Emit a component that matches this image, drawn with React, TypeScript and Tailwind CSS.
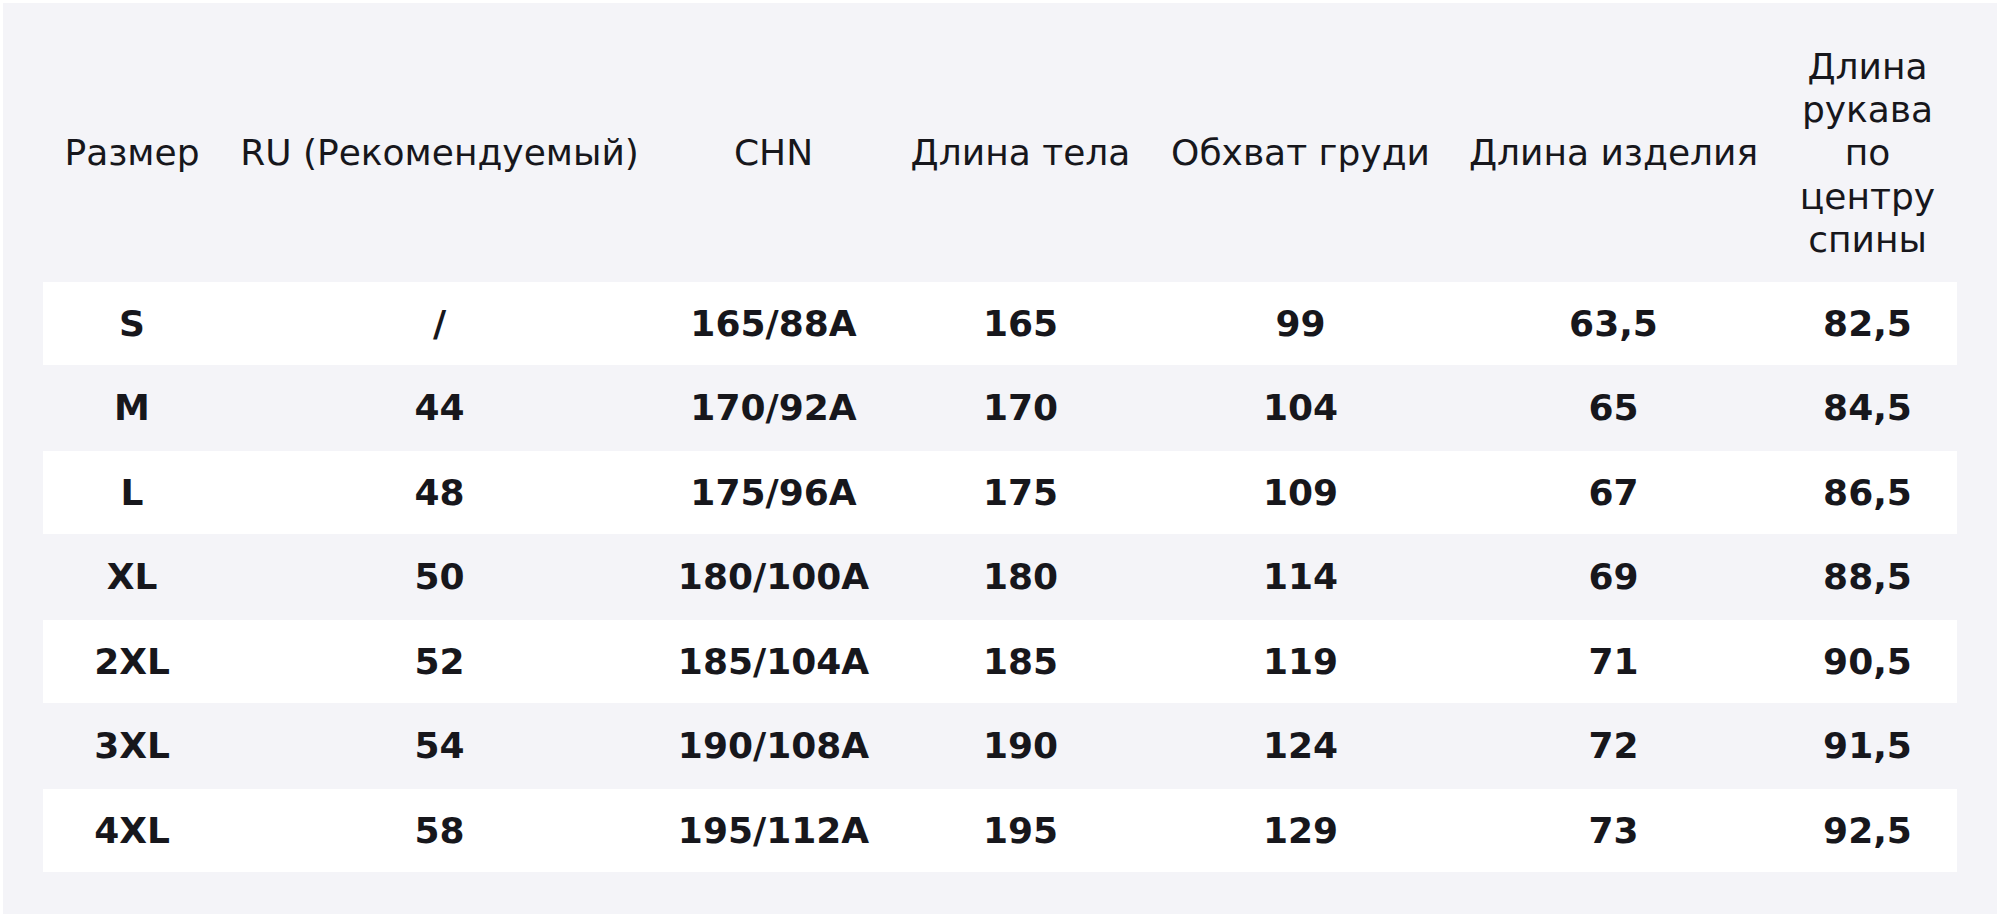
import React from 'react'

type SizeRow = {
  size: string
  ru: string
  chn: string
  body: string
  chest: string
  length: string
  sleeve: string
}

const headers = ['Размер', 'RU (Рекомендуемый)', 'CHN', 'Длина тела', 'Обхват груди', 'Длина изделия']

// last header wraps word by word in the chart
const sleeveHeader = ['Длина', 'рукава', 'по', 'центру', 'спины']

// column widths picked so the centres line up with the chart
const colWidths = ['w-[178px]', 'w-[437px]', 'w-[231px]', 'w-[263px]', 'w-[297px]', 'w-[329px]', 'w-[179px]']

const rows: SizeRow[] = [
  { size: 'S', ru: '/', chn: '165/88A', body: '165', chest: '99', length: '63,5', sleeve: '82,5' },
  { size: 'M', ru: '44', chn: '170/92A', body: '170', chest: '104', length: '65', sleeve: '84,5' },
  { size: 'L', ru: '48', chn: '175/96A', body: '175', chest: '109', length: '67', sleeve: '86,5' },
  { size: 'XL', ru: '50', chn: '180/100A', body: '180', chest: '114', length: '69', sleeve: '88,5' },
  { size: '2XL', ru: '52', chn: '185/104A', body: '185', chest: '119', length: '71', sleeve: '90,5' },
  { size: '3XL', ru: '54', chn: '190/108A', body: '190', chest: '124', length: '72', sleeve: '91,5' },
  { size: '4XL', ru: '58', chn: '195/112A', body: '195', chest: '129', length: '73', sleeve: '92,5' },
]

export default function App() {
  return (
    <div className="min-h-screen bg-white p-[3px] font-['DejaVu_Sans',sans-serif] text-[#17171c]">
      <div className="bg-[#f4f4f8] px-10 pt-10 pb-[42px]">
        <table className="w-full table-fixed text-center text-[36px] leading-[1.2]">
          <colgroup>
            {colWidths.map((w, i) => (
              <col key={i} className={w} />
            ))}
          </colgroup>
          <thead>
            <tr>
              {headers.map((h) => (
                <th key={h} className="px-4 pt-0.5 pb-[21px] align-middle font-normal whitespace-nowrap">
                  {h}
                </th>
              ))}
              <th className="px-2 pt-0.5 pb-[21px] align-middle font-normal">
                <div className="flex flex-col items-center">
                  {sleeveHeader.map((w) => (
                    <span key={w}>{w}</span>
                  ))}
                </div>
              </th>
            </tr>
          </thead>
          <tbody className="font-bold">
            {rows.map((r, i) => (
              <tr key={r.size} className={i % 2 === 0 ? 'h-[83px] bg-white' : 'h-[86px] bg-[#f4f4f8]'}>
                <td className="px-2 align-middle">{r.size}</td>
                <td className="px-2 align-middle">{r.ru}</td>
                <td className="px-2 align-middle">{r.chn}</td>
                <td className="px-2 align-middle">{r.body}</td>
                <td className="px-2 align-middle">{r.chest}</td>
                <td className="px-2 align-middle">{r.length}</td>
                <td className="px-2 align-middle">{r.sleeve}</td>
              </tr>
            ))}
          </tbody>
        </table>
      </div>
    </div>
  )
}
